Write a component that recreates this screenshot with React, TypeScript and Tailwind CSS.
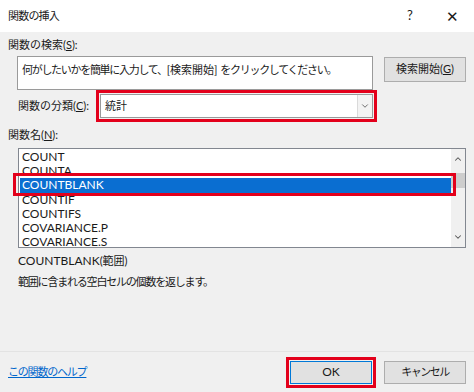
import { ChevronDown, ChevronUp } from 'lucide-react'

const font = { fontFamily: 'Lato, "Noto Sans CJK JP", sans-serif' }

const items = ['COUNT', 'COUNTA', 'COUNTBLANK', 'COUNTIF', 'COUNTIFS', 'COVARIANCE.P', 'COVARIANCE.S']

export default function App() {
  return (
    <div style={font} className="w-[474px] h-[392px] flex flex-col text-[11px] text-[#1a1a1a] overflow-hidden">
      {/* Title bar */}
      <div className="h-[32px] bg-white flex items-center pl-[8px] shrink-0">
        <span className="flex-1 text-[11px] tracking-[-0.8px]">関数の挿入</span>
        <span className="w-[20px] text-center text-[13px] mr-[22px]">?</span>
        <span className="w-[20px] text-center text-[15px] mr-[12px] font-light">✕</span>
      </div>

      {/* Body */}
      <div className="flex-1 bg-[#f0f0f0] flex flex-col px-[8px] pt-[5px]">
        <div className="h-[16px] leading-[16px]">
          関数の検索(<span className="underline">S</span>):
        </div>

        <div className="flex mt-[3px]">
          <div className="ml-[9px] w-[356px] h-[34px] bg-white border border-[#9a9a9a] px-[4px] pt-[5px] leading-[16px] whitespace-nowrap overflow-hidden">
            <span className="tracking-[-1.3px]">何がしたいかを簡単に入力して、</span>
            <span>[検索開始]</span>
            <span className="ml-[3px] tracking-[-1.3px]">をクリックしてください。</span>
          </div>
          <button className="ml-[11px] mt-[1px] w-[82px] h-[25px] bg-[#e1e1e1] border border-[#adadad] text-[11px]">
            検索開始(<span className="underline">G</span>)
          </button>
        </div>

        <div className="flex items-center h-[32px]">
          <span className="ml-[10px] w-[78px] whitespace-nowrap">
            関数の分類(<span className="underline">C</span>):
          </span>
          <div className="w-[281px] h-[32px] border-[3px] border-[#e3001b] p-[1px]">
            <div className="h-full bg-white border border-[#9a9a9a] flex items-center">
              <span className="flex-1 pl-[4px]">統計</span>
              <div className="w-[15px] h-full flex items-center justify-center bg-[#f3f3f3] border-l border-[#dadada]">
                <ChevronDown className="w-[10px] h-[10px] text-[#555]" strokeWidth={2} />
              </div>
            </div>
          </div>
        </div>

        <div className="h-[16px] leading-[16px] mt-[5px]">
          関数名(<span className="underline">N</span>):
        </div>

        {/* List */}
        <div className="relative ml-[10px] mt-[5px] w-[448px] h-[100px] bg-white border border-[#828790] flex">
          <div className="flex-1 pl-[1px] pt-[1px] overflow-hidden">
            {items.map((it) => (
              <div
                key={it}
                className={`h-[14.2px] leading-[14px] pl-[2px] text-[12px] ${
                  it === 'COUNTBLANK' ? 'bg-[#0a6ed1] text-white' : ''
                }`}
              >
                {it}
              </div>
            ))}
          </div>
          <div className="w-[14px] bg-[#f0f0f0] flex flex-col items-center">
            <ChevronUp className="w-[10px] h-[10px] mt-[5px] text-[#555]" strokeWidth={2.5} />
            <div className="w-full h-[15px] bg-[#cdcdcd] mt-[9px]" />
            <div className="flex-1" />
            <ChevronDown className="w-[10px] h-[10px] mb-[5px] text-[#555]" strokeWidth={2.5} />
          </div>
          <div className="absolute left-[-6px] top-[24px] w-[443px] h-[23px] border-[3px] border-[#e3001b]" />
        </div>

        <div className="ml-[10px] mt-[5px] leading-[16px] text-[12px]">
          COUNTBLANK<span className="text-[11px]">(範囲)</span>
        </div>
        <div className="ml-[10px] mt-[5px] leading-[16px] tracking-[-1.2px]">範囲に含まれる空白セルの個数を返します。</div>

        <div className="flex-1" />
        <div className="border-t border-[#e3e3e3] mx-[-8px]" />
        <div className="flex items-center h-[40px]">
          <span className="flex-1 text-[#0066cc] underline tracking-[-1.2px]">この関数のヘルプ</span>
          <div className="border-[3px] border-[#e3001b] p-[1px] mr-[8px]">
            <button className="w-[82px] h-[23px] bg-[#e1e1e1] border border-[#0078d7] text-[12px]">OK</button>
          </div>
          <button className="w-[82px] h-[23px] bg-[#e1e1e1] border border-[#adadad] text-[11px] tracking-[-1.5px]">キャンセル</button>
        </div>
      </div>
    </div>
  )
}
